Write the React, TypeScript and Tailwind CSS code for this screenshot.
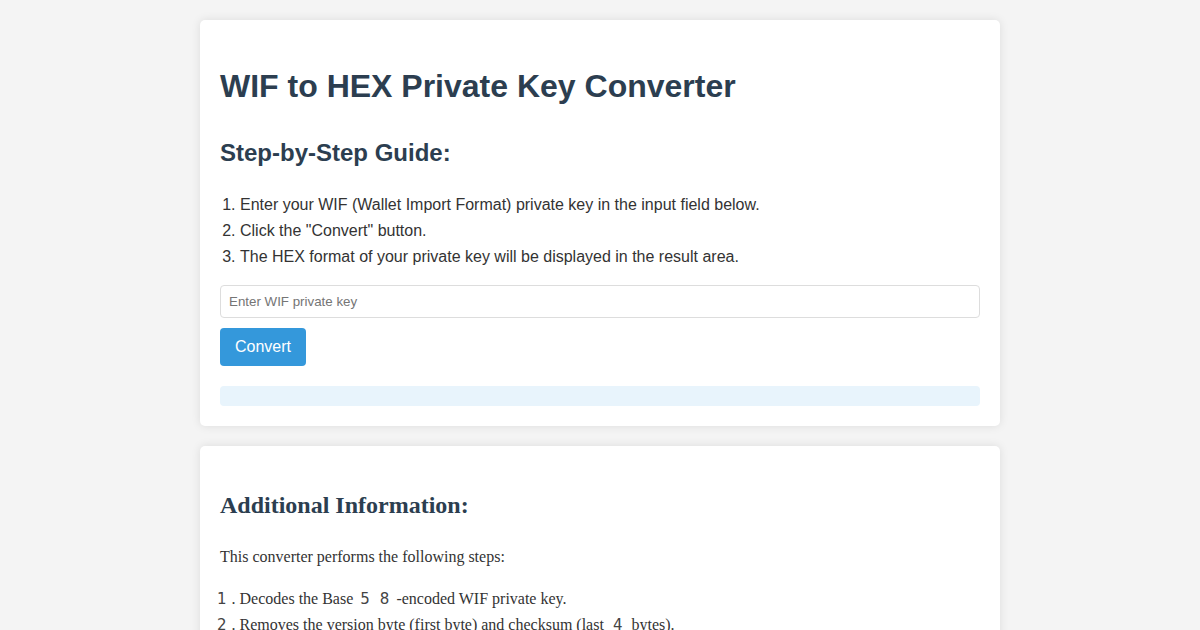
import React from 'react';

const digit = "font-['DejaVu_Sans',sans-serif] text-[15px] text-[#444]";

const Num: React.FC<{ children: React.ReactNode; wide?: boolean }> = ({ children, wide }) => (
  <span className={`${wide ? 'px-[5px]' : 'px-[3px]'} ${digit}`}>{children}</span>
);

// leading step number, sits a little left of the text column
const Step: React.FC<{ n: number }> = ({ n }) => (
  <span className={`-ml-[6px] pl-[3px] pr-[5px] ${digit}`}>{n}</span>
);

export default function App() {
  return (
    <div className="min-h-screen w-full bg-[#f4f4f4] text-[#333] leading-[1.6] flex flex-col items-center gap-5 pt-5">
      {/* Converter card */}
      <div className="w-[800px] bg-white rounded-[5px] shadow-[0_0_10px_rgba(0,0,0,0.1)] p-5 font-['Liberation_Sans',Arial,sans-serif]">
        <h1 className="text-[32px] font-bold text-[#2c3e50] my-[21.44px]">WIF to HEX Private Key Converter</h1>
        <h2 className="text-[24px] font-bold text-[#2c3e50] mt-[21.44px] mb-[19.92px]">Step-by-Step Guide:</h2>
        <ol className="list-decimal pl-5 text-[16px] mb-4">
          <li>Enter your WIF (Wallet Import Format) private key in the input field below.</li>
          <li>Click the "Convert" button.</li>
          <li>The HEX format of your private key will be displayed in the result area.</li>
        </ol>
        <input
          type="text"
          placeholder="Enter WIF private key"
          className="block w-full h-[33px] px-2 border border-[#ddd] rounded-[4px] text-[13.33px] placeholder:text-[#757575] outline-none"
        />
        <button className="mt-[10px] h-[38px] px-[15px] bg-[#3498db] text-white text-[16px] rounded-[4px]">Convert</button>
        <div className="mt-5 h-5 bg-[#e8f4fc] rounded-[4px]" />
      </div>

      {/* Info card */}
      <div className="w-[800px] bg-white rounded-[5px] shadow-[0_0_10px_rgba(0,0,0,0.1)] p-5 font-['Liberation_Serif','Times_New_Roman',serif]">
        <h2 className="text-[24px] font-bold text-[#2c3e50] mt-[19.92px] mb-[19.92px]">Additional Information:</h2>
        <p className="text-[16px] mb-4">This converter performs the following steps:</p>
        <div className="text-[16px]">
          <p><Step n={1} />. Decodes the Base <Num>5</Num> <Num>8</Num> -encoded WIF private key.</p>
          <p><Step n={2} />. Removes the version byte (first byte) and checksum (last <Num wide>4</Num> bytes).</p>
          <p><Step n={3} />. Converts the remaining bytes to a hexadecimal string.</p>
        </div>
      </div>
    </div>
  );
}
